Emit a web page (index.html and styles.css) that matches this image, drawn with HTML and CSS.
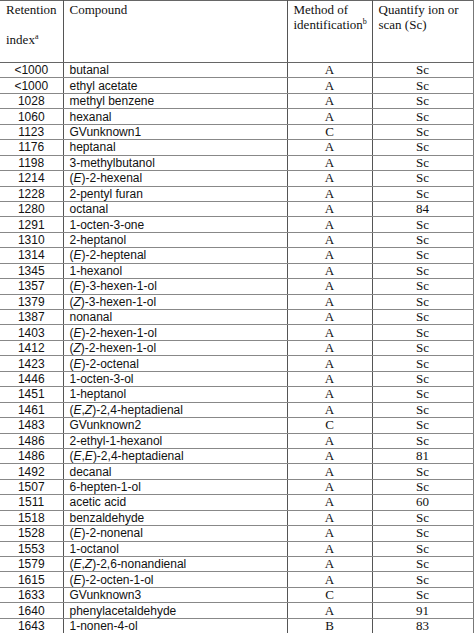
FILE: index.html
```html
<!DOCTYPE html>
<html>
<head>
<meta charset="utf-8">
<link rel="stylesheet" href="styles.css">
</head>
<body>
<table class="data">
<colgroup>
<col class="c-ri"><col class="c-cmp"><col class="c-meth"><col class="c-q">
</colgroup>
<thead>
<tr class="head">
<th class="h-ri">Retention<br><br>index<sup>a</sup></th>
<th class="h-cmp">Compound</th>
<th class="h-meth">Method of<br>identification<sup>b</sup></th>
<th class="h-q">Quantify ion or<br>scan (Sc)</th>
</tr>
</thead>
<tbody>
<tr><td class="ri">&lt;1000</td><td class="cmp">butanal</td><td class="m">A</td><td class="q">Sc</td></tr>
<tr><td class="ri">&lt;1000</td><td class="cmp">ethyl acetate</td><td class="m">A</td><td class="q">Sc</td></tr>
<tr><td class="ri">1028</td><td class="cmp">methyl benzene</td><td class="m">A</td><td class="q">Sc</td></tr>
<tr><td class="ri">1060</td><td class="cmp">hexanal</td><td class="m">A</td><td class="q">Sc</td></tr>
<tr><td class="ri">1123</td><td class="cmp">GVunknown1</td><td class="m">C</td><td class="q">Sc</td></tr>
<tr><td class="ri">1176</td><td class="cmp">heptanal</td><td class="m">A</td><td class="q">Sc</td></tr>
<tr><td class="ri">1198</td><td class="cmp">3-methylbutanol</td><td class="m">A</td><td class="q">Sc</td></tr>
<tr><td class="ri">1214</td><td class="cmp">(<i>E</i>)-2-hexenal</td><td class="m">A</td><td class="q">Sc</td></tr>
<tr><td class="ri">1228</td><td class="cmp">2-pentyl furan</td><td class="m">A</td><td class="q">Sc</td></tr>
<tr><td class="ri">1280</td><td class="cmp">octanal</td><td class="m">A</td><td class="q">84</td></tr>
<tr><td class="ri">1291</td><td class="cmp">1-octen-3-one</td><td class="m">A</td><td class="q">Sc</td></tr>
<tr><td class="ri">1310</td><td class="cmp">2-heptanol</td><td class="m">A</td><td class="q">Sc</td></tr>
<tr><td class="ri">1314</td><td class="cmp">(<i>E</i>)-2-heptenal</td><td class="m">A</td><td class="q">Sc</td></tr>
<tr><td class="ri">1345</td><td class="cmp">1-hexanol</td><td class="m">A</td><td class="q">Sc</td></tr>
<tr><td class="ri">1357</td><td class="cmp">(<i>E</i>)-3-hexen-1-ol</td><td class="m">A</td><td class="q">Sc</td></tr>
<tr><td class="ri">1379</td><td class="cmp">(<i>Z</i>)-3-hexen-1-ol</td><td class="m">A</td><td class="q">Sc</td></tr>
<tr><td class="ri">1387</td><td class="cmp">nonanal</td><td class="m">A</td><td class="q">Sc</td></tr>
<tr><td class="ri">1403</td><td class="cmp">(<i>E</i>)-2-hexen-1-ol</td><td class="m">A</td><td class="q">Sc</td></tr>
<tr><td class="ri">1412</td><td class="cmp">(<i>Z</i>)-2-hexen-1-ol</td><td class="m">A</td><td class="q">Sc</td></tr>
<tr><td class="ri">1423</td><td class="cmp">(<i>E</i>)-2-octenal</td><td class="m">A</td><td class="q">Sc</td></tr>
<tr><td class="ri">1446</td><td class="cmp">1-octen-3-ol</td><td class="m">A</td><td class="q">Sc</td></tr>
<tr><td class="ri">1451</td><td class="cmp">1-heptanol</td><td class="m">A</td><td class="q">Sc</td></tr>
<tr><td class="ri">1461</td><td class="cmp">(<i>E</i>,<i>Z</i>)-2,4-heptadienal</td><td class="m">A</td><td class="q">Sc</td></tr>
<tr><td class="ri">1483</td><td class="cmp">GVunknown2</td><td class="m">C</td><td class="q">Sc</td></tr>
<tr><td class="ri">1486</td><td class="cmp">2-ethyl-1-hexanol</td><td class="m">A</td><td class="q">Sc</td></tr>
<tr><td class="ri">1486</td><td class="cmp">(<i>E</i>,<i>E</i>)-2,4-heptadienal</td><td class="m">A</td><td class="q">81</td></tr>
<tr><td class="ri">1492</td><td class="cmp">decanal</td><td class="m">A</td><td class="q">Sc</td></tr>
<tr><td class="ri">1507</td><td class="cmp">6-hepten-1-ol</td><td class="m">A</td><td class="q">Sc</td></tr>
<tr><td class="ri">1511</td><td class="cmp">acetic acid</td><td class="m">A</td><td class="q">60</td></tr>
<tr><td class="ri">1518</td><td class="cmp">benzaldehyde</td><td class="m">A</td><td class="q">Sc</td></tr>
<tr><td class="ri">1528</td><td class="cmp">(<i>E</i>)-2-nonenal</td><td class="m">A</td><td class="q">Sc</td></tr>
<tr><td class="ri">1553</td><td class="cmp">1-octanol</td><td class="m">A</td><td class="q">Sc</td></tr>
<tr><td class="ri">1579</td><td class="cmp">(<i>E</i>,<i>Z</i>)-2,6-nonandienal</td><td class="m">A</td><td class="q">Sc</td></tr>
<tr><td class="ri">1615</td><td class="cmp">(<i>E</i>)-2-octen-1-ol</td><td class="m">A</td><td class="q">Sc</td></tr>
<tr><td class="ri">1633</td><td class="cmp">GVunknown3</td><td class="m">C</td><td class="q">Sc</td></tr>
<tr><td class="ri">1640</td><td class="cmp">phenylacetaldehyde</td><td class="m">A</td><td class="q">91</td></tr>
<tr><td class="ri">1643</td><td class="cmp">1-nonen-4-ol</td><td class="m">B</td><td class="q">83</td></tr>
</tbody>
</table>
</body>
</html>
```

FILE: styles.css
```css
html, body {
  margin: 0;
  padding: 0;
  background: #fff;
}

.data {
  border-collapse: collapse;
  table-layout: fixed;
  width: 473px;
  color: #111;
  border-top: 1px solid #666;
  border-right: 1px solid #777;
}

.c-ri { width: 63px; }
.c-cmp { width: 224px; }
.c-meth { width: 85px; }
.c-q { width: 101px; }

.head th {
  height: 60px;
  padding: 1px 0 0 6px;
  vertical-align: top;
  text-align: left;
  font-family: "Liberation Serif", "Times New Roman", serif;
  font-weight: normal;
  font-size: 13px;
  line-height: 15px;
  border-bottom: 1px solid #666;
  border-left: 1px solid #555;
}

.head th.h-ri {
  border-left: none;
}

.data sup {
  font-size: 8px;
  line-height: 0;
  vertical-align: 5px;
}

.data tbody tr {
  height: 15.45px;
}

.data td {
  padding: 0;
  border-bottom: 1px solid #888;
  border-left: 1px solid #555;
  white-space: nowrap;
  vertical-align: middle;
  line-height: 14px;
}

.data td.ri {
  border-left: none;
  text-align: center;
  font-family: "Liberation Sans", Arial, sans-serif;
  font-size: 12px;
}

.data td.cmp {
  padding-left: 6px;
  font-family: "Liberation Sans", Arial, sans-serif;
  font-size: 12px;
}

.data td.m,
.data td.q {
  text-align: center;
  font-family: "Liberation Serif", "Times New Roman", serif;
  font-size: 13px;
}
```
